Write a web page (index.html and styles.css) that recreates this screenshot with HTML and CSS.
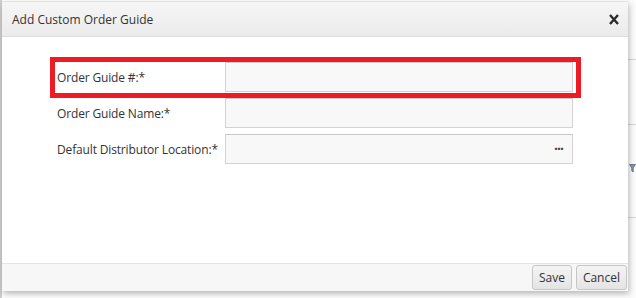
FILE: index.html
```html
<!DOCTYPE html>
<html>
<head>
  <title>Add Custom Order Guide</title>
  <link rel="stylesheet" href="styles.css">
</head>
<body>

<div class="page">
  <div class="page-left"></div>
  <div class="page-right">
    <div class="grid-line" style="top: 59px;"></div>
    <div class="grid-line" style="top: 124px;"></div>
    <div class="grid-line" style="top: 217px;"></div>
    <svg class="funnel" width="7" height="9" viewBox="0 0 7 9">
      <path d="M0.5 0.5 H6.5 L4.2 4 V8 L2.8 7 V4 Z" fill="#8e9aa8" stroke="#5d6d80" stroke-width="0.8"/>
    </svg>
  </div>
</div>

<div class="dialog">
  <div class="dialog-header">
    <span class="dialog-title">Add Custom Order Guide</span>
    <svg class="close-btn" width="10" height="11" viewBox="0 0 10 11">
      <path d="M1 1 L9 10 M9 1 L1 10" stroke="#2b2b2b" stroke-width="2.4"/>
    </svg>
  </div>

  <div class="dialog-body">
    <div class="form">
      <div class="highlight"></div>

      <label for="guide-no">Order Guide #:*</label>
      <input type="text" class="field" id="guide-no">

      <label for="guide-name">Order Guide Name:*</label>
      <input type="text" class="field" id="guide-name">

      <label for="location">Default Distributor Location:*</label>
      <div class="field picker" id="location"><span class="dots">&middot;&middot;&middot;</span></div>
    </div>
  </div>

  <div class="dialog-footer">
    <button class="btn">Save</button>
    <button class="btn">Cancel</button>
  </div>
</div>

</body>
</html>
```

FILE: styles.css
```css
body {
  margin: 0;
  font-family: "Open Sans", "Noto Sans", sans-serif;
  color: #333;
  background: #fff;
}

/* page behind the dialog */
.page {
  display: flex;
  justify-content: space-between;
  width: 636px;
  height: 298px;
}
.page-left {
  width: 2px;
  background: #cfcfcf;
}
.page-right {
  position: relative;
  width: 8px;
  background: #fbfbfb;
}
.grid-line {
  position: absolute;
  left: 0;
  right: 0;
  height: 1px;
  background: #d6d6d6;
}
.funnel {
  position: absolute;
  left: 1px;
  top: 164px;
}

/* dialog */
.dialog {
  position: absolute;
  left: 2px;
  top: 1px;
  width: 626px;
  height: 290px;
  background: #fff;
  display: flex;
  flex-direction: column;
  box-shadow: 1px 3px 6px rgba(0, 0, 0, 0.28);
}
.dialog-header {
  height: 34px;
  display: flex;
  align-items: center;
  justify-content: space-between;
  padding: 0 9px 0 10px;
  background: linear-gradient(#f6f6f6, #ebebeb);
  border-top: 1px solid #e2e2e2;
  border-bottom: 1px solid #dcdcdc;
}
.dialog-title {
  font-size: 12px;
  color: #333;
}

.dialog-body {
  flex: 1;
  padding: 25px 0 0 55px;
}
.form {
  position: relative;
  display: grid;
  grid-template-columns: 168px 348px;
  grid-auto-rows: 30px;
  row-gap: 6px;
  align-items: center;
}
.form label {
  font-size: 12px;
  color: #333;
  white-space: nowrap;
  letter-spacing: -0.15px;
}
.field {
  box-sizing: border-box;
  width: 348px;
  height: 30px;
  margin: 0;
  border: 1px solid #d3d3d3;
  border-top-color: #c8c8c8;
  background: #f8f8f8;
  font: inherit;
}
.picker {
  display: flex;
  align-items: center;
  justify-content: flex-end;
  padding-right: 9px;
}
.dots {
  font-size: 14px;
  font-weight: bold;
  letter-spacing: -1px;
  color: #444;
  line-height: 1;
}

/* red annotation frame around the first row */
.highlight {
  position: absolute;
  left: -7px;
  top: -5px;
  width: 521px;
  height: 31px;
  border: 5px solid #ed1c24;
  pointer-events: none;
}

.dialog-footer {
  height: 27px;
  display: flex;
  align-items: center;
  justify-content: flex-end;
  gap: 4px;
  padding-right: 1px;
  background: #f7f7f7;
  border-top: 1px solid #e3e3e3;
}
.btn {
  height: 25px;
  padding: 0 6px;
  font-family: "Open Sans", "Noto Sans", sans-serif;
  font-size: 12px;
  color: #333;
  background: linear-gradient(#f4f4f4, #e4e4e4);
  border: 1px solid #c6c6c6;
  border-radius: 3px;
}
```
